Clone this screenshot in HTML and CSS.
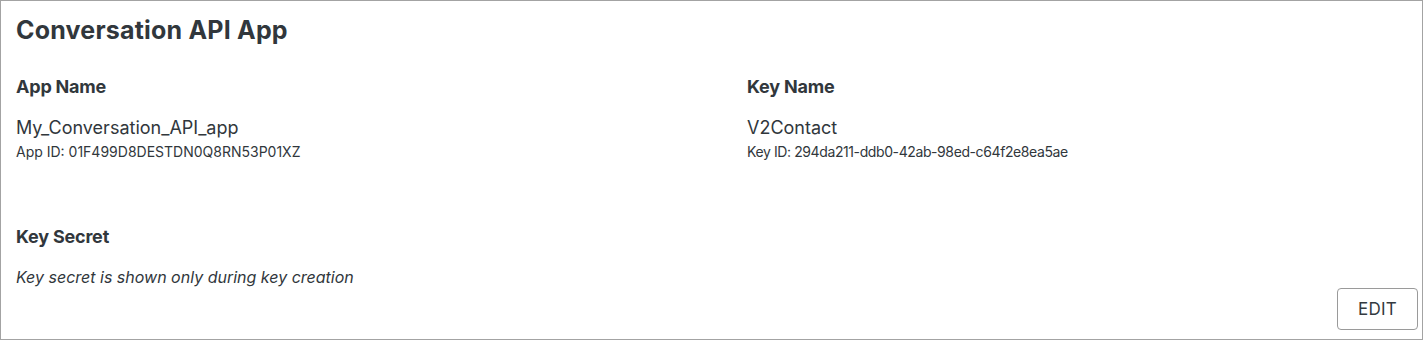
FILE: index.html
```html
<!DOCTYPE html>
<html>
<head>
<meta charset="utf-8">
<link rel="stylesheet" href="styles.css">
</head>
<body>
<section class="card">
  <h1 class="title">Conversation API App</h1>
  <div class="grid">
    <div class="field">
      <h2 class="label">App Name</h2>
      <div class="value">My_Conversation_API_app</div>
      <div class="sub">App ID: 01F499D8DESTDN0Q8RN53P01XZ</div>
    </div>
    <div class="field">
      <h2 class="label">Key Name</h2>
      <div class="value">V2Contact</div>
      <div class="sub sub-tight">Key ID: 294da211-ddb0-42ab-98ed-c64f2e8ea5ae</div>
    </div>
  </div>
  <div class="secret">
    <h2 class="label">Key Secret</h2>
    <p class="note">Key secret is shown only during key creation</p>
  </div>
  <div class="actions">
    <button class="edit">EDIT</button>
  </div>
</section>
</body>
</html>
```

FILE: styles.css
```css
html, body {
  margin: 0;
  padding: 0;
  background: #ffffff;
}
body {
  font-family: Inter, "Liberation Sans", sans-serif;
  color: #31373c;
}
.card {
  box-sizing: border-box;
  width: 1423px;
  height: 340px;
  border: 1px solid #a3a3a3;
  padding: 13px 4px 0 15px;
  display: flex;
  flex-direction: column;
}
.title {
  margin: 0;
  font-size: 25px;
  font-weight: 700;
  line-height: 32px;
  letter-spacing: 0.2px;
}
.grid {
  display: grid;
  grid-template-columns: 731px 1fr;
  margin-top: 30px;
}
.label {
  margin: 0;
  font-size: 18px;
  font-weight: 700;
  line-height: 22px;
  letter-spacing: -0.2px;
}
.value {
  margin-top: 19px;
  font-size: 18px;
  line-height: 22px;
}
.sub {
  margin-top: 5px;
  font-size: 14px;
  line-height: 16px;
}
.sub-tight {
  letter-spacing: -0.4px;
}
.secret {
  margin-top: 66px;
}
.note {
  margin: 19px 0 0 0;
  font-size: 16px;
  font-style: italic;
  line-height: 20px;
}
.actions {
  display: flex;
  justify-content: flex-end;
  margin-top: 1px;
}
.edit {
  width: 81px;
  height: 42px;
  border: 1px solid #9a9a9a;
  border-radius: 4px;
  background: #ffffff;
  color: #333a40;
  font-family: Inter, "Liberation Sans", sans-serif;
  font-size: 17px;
  letter-spacing: 0.3px;
}
```
